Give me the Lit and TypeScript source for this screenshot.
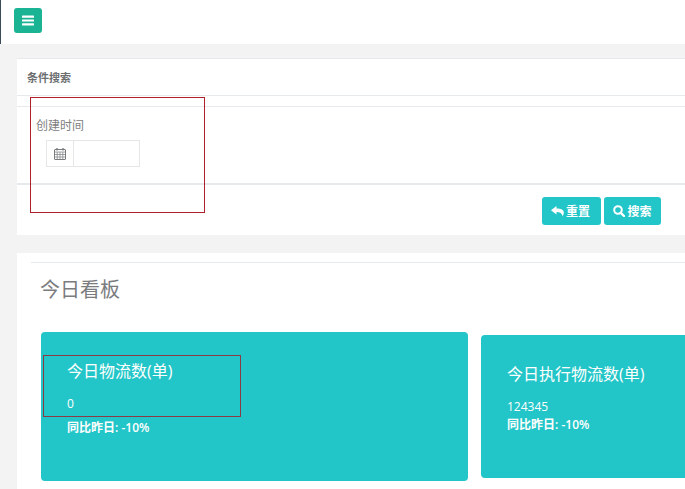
import { LitElement, html, css } from "lit";
import { customElement } from "lit/decorators.js";

@customElement("app-root")
export class AppRoot extends LitElement {
  static styles = css`
    :host {
      display: block;
      position: relative;
      width: 685px;
      height: 489px;
      overflow: hidden;
      background: #f3f3f4;
      color: #676a6c;
      font-family: "Open Sans", "Noto Sans CJK SC", sans-serif;
      font-size: 13px;
    }
    * { box-sizing: border-box; }
    .topbar {
      height: 44px;
      background: #fff;
      padding: 8px 14px 0 13px;
      border-left: 1px solid #3a4a58;
    }
    .menu {
      width: 28px;
      height: 25px;
      background: #1ab394;
      border-radius: 3px;
      display: flex;
      align-items: center;
      justify-content: center;
    }
    .panel {
      margin-left: 17px;
      background: #fff;
      border-top: 1px solid #e7eaec;
    }
    .search { margin-top: 14px; height: 177px; }
    .search-head {
      height: 37px;
      border-bottom: 1px solid #e7eaec;
      padding: 0 10px;
      display: flex;
      align-items: center;
      font-size: 11px;
      font-weight: 600;
      color: #6b6d6f;
    }
    .form {
      margin-top: 10px;
      height: 79px;
      border-top: 1px solid #e7eaec;
      border-bottom: 2px solid #e7eaec;
      padding: 11px 19px 0;
    }
    .form label { display: block; font-size: 12px; line-height: 16px; color: #808080; }
    .date { display: flex; margin: 6px 0 0 10px; height: 27px; }
    .addon {
      width: 28px;
      border: 1px solid #e5e6e7;
      display: flex;
      align-items: center;
      justify-content: center;
    }
    .input { width: 66px; border: 1px solid #e5e6e7; border-left: 0; }
    .actions {
      display: flex;
      justify-content: flex-end;
      gap: 3px;
      padding: 12px 24px 0 0;
    }
    .btn {
      height: 28px;
      background: #23c6c8;
      color: #fff;
      border-radius: 3px;
      display: flex;
      align-items: center;
      justify-content: center;
      gap: 2px;
      font-size: 12px;
      font-weight: 600;
    }
    .reset { width: 59px; padding-right: 2px; }
    .find { width: 57px; }
    .board { margin-top: 18px; height: 236px; border-top: 0; position: relative; padding: 9px 0 0 14px; }
    .board-in { border-top: 1px solid #e7eaec; height: 100%; padding: 9px 0 0 10px; }
    .board h2 { margin: 0 0 0 -1px; font-weight: 400; font-size: 20px; line-height: 36px; color: #7a7c7e; }
    .cards { display: flex; align-items: center; gap: 13px; margin-top: 24px; width: 700px; }
    .card {
      background: #23c6c8;
      color: #fff;
      border-radius: 4px;
      flex: none;
      display: flex;
      flex-direction: column;
    }
    .one { width: 427px; height: 149px; padding: 28px 26px 0; }
    .two { width: 300px; height: 143px; padding: 28px 26px 0; }
    .card h3 { margin: 0; font-weight: 400; font-size: 16px; line-height: 22px; }
    .num { font-size: 12px; line-height: 16px; }
    .one .num { margin-top: 14px; }
    .two .num { margin-top: 14px; }
    .cmp { font-size: 12px; line-height: 16px; font-weight: 600; }
    .one .cmp { margin-top: 8px; }
    .two .cmp { margin-top: 2px; }
    .mark { position: absolute; border: 1px solid #b0202a; pointer-events: none; }
    .m1 { left: 30px; top: 97px; width: 175px; height: 116px; }
    .m2 { left: 43px; top: 355px; width: 198px; height: 62px; border-color: #8a3c44; }
    svg { display: block; }
  `;

  render() {
    return html`
      <div class="topbar">
        <div class="menu">
          <svg width="12" height="11" viewBox="0 0 12 11" fill="#fff">
            <rect x="0" y="0.5" width="12" height="2.2" rx="0.5"></rect>
            <rect x="0" y="4.4" width="12" height="2.2" rx="0.5"></rect>
            <rect x="0" y="8.3" width="12" height="2.2" rx="0.5"></rect>
          </svg>
        </div>
      </div>
      <section class="panel search">
        <div class="search-head">条件搜索</div>
        <div class="form">
          <label>创建时间</label>
          <div class="date">
            <div class="addon">
              <svg width="12" height="12" viewBox="0 0 12 12" fill="none" stroke="#7a7c7e" stroke-width="1">
                <path d="M1 1.5h10a.5.5 0 0 1 .5.5v9a.5.5 0 0 1-.5.5H1a.5.5 0 0 1-.5-.5V2a.5.5 0 0 1 .5-.5z"></path>
                <path d="M0.5 4h11M0.5 6.5h11M0.5 9h11M3.2 4v7.5M6 4v7.5M8.8 4v7.5" stroke-width="0.7"></path>
                <path d="M3 0v2.5M9 0v2.5" stroke-width="1.4"></path>
              </svg>
            </div>
            <div class="input"></div>
          </div>
        </div>
        <div class="actions">
          <div class="btn reset">
            <svg width="13" height="11" viewBox="0 0 13 11" fill="#fff">
              <path d="M5.5 0 0 4.3l5.5 4.3V6c3 0 5 .6 6 4.2.9-1.2 1.3-2.4 1.3-3.5C12.8 3.6 10 2.6 5.5 2.6z"></path>
            </svg>
            <span>重置</span>
          </div>
          <div class="btn find">
            <svg width="12" height="12" viewBox="0 0 12 12" fill="none" stroke="#fff">
              <circle cx="5" cy="5" r="3.8" stroke-width="2"></circle>
              <path d="M7.8 7.8 11 11" stroke-width="2.4" stroke-linecap="round"></path>
            </svg>
            <span>搜索</span>
          </div>
        </div>
      </section>
      <section class="panel board">
        <div class="board-in">
          <h2>今日看板</h2>
          <div class="cards">
            <div class="card one">
              <h3>今日物流数(单)</h3>
              <div class="num">0</div>
              <div class="cmp">同比昨日: -10%</div>
            </div>
            <div class="card two">
              <h3>今日执行物流数(单)</h3>
              <div class="num">124345</div>
              <div class="cmp">同比昨日: -10%</div>
            </div>
          </div>
        </div>
      </section>
      <div class="mark m1"></div>
      <div class="mark m2"></div>
    `;
  }
}
